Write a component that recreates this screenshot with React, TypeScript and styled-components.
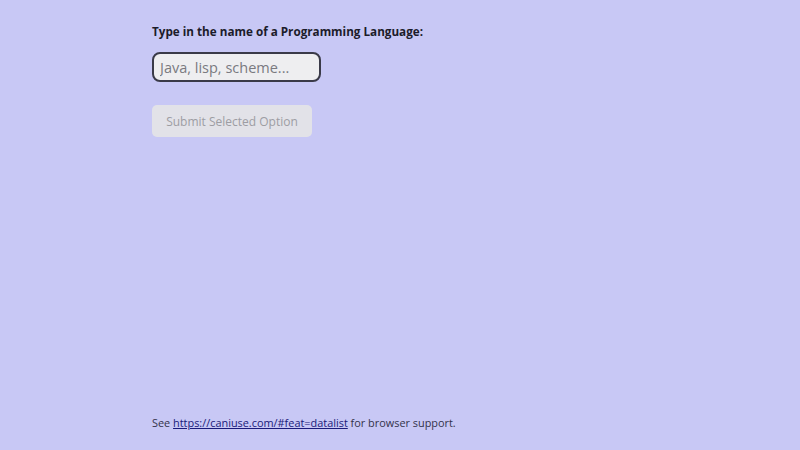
import React, { useEffect, useRef } from 'react';
import styled, { createGlobalStyle } from 'styled-components';

const GlobalStyle = createGlobalStyle`
  html, body {
    margin: 0;
    padding: 0;
    background: #c8c8f5;
  }
  body {
    font-family: "Open Sans", "Liberation Sans", sans-serif;
  }
`;

const Page = styled.div`
  display: flex;
  flex-direction: column;
  height: 450px;
  box-sizing: border-box;
  padding: 22px 0 20px 152px;
`;

const Label = styled.label`
  font-size: 11.7px;
  font-weight: 700;
  color: #1c1c2a;
  line-height: 18px;
`;

const Field = styled.input`
  margin-top: 12px;
  width: 169px;
  height: 30px;
  box-sizing: border-box;
  border: 2px solid #3a3a48;
  border-radius: 8px;
  background: #eeeef0;
  padding: 0 6px;
  font-family: inherit;
  font-size: 14.5px;
  color: #222;
  outline: none;
  &::placeholder {
    color: #7a7a80;
  }
  &::-webkit-calendar-picker-indicator {
    display: none !important;
  }
`;

const SubmitButton = styled.button`
  margin-top: 23px;
  width: 160px;
  height: 32px;
  border: none;
  border-radius: 5px;
  background: #e2e2e8;
  color: #9d9da3;
  font-family: inherit;
  font-size: 12px;
  cursor: default;
`;

const Footer = styled.p`
  margin: auto 0 0;
  font-size: 10.9px;
  color: #33334a;
`;

const Link = styled.a`
  color: #1a1a7a;
  text-decoration: underline;
`;

export default function App() {
  const ref = useRef<HTMLInputElement>(null);
  useEffect(() => {
    ref.current?.focus();
  }, []);

  return (
    <>
      <GlobalStyle />
      <Page>
        <Label htmlFor="lang">Type in the name of a Programming Language:</Label>
        <div>
          <Field id="lang" ref={ref} list="langs" placeholder="Java, lisp, scheme..." />
          <datalist id="langs">
            <option value="Java" />
            <option value="Lisp" />
            <option value="Scheme" />
          </datalist>
        </div>
        <div>
          <SubmitButton disabled>Submit Selected Option</SubmitButton>
        </div>
        <Footer>
          See <Link href="https://caniuse.com/#feat=datalist">https://caniuse.com/#feat=datalist</Link> for browser support.
        </Footer>
      </Page>
    </>
  );
}
